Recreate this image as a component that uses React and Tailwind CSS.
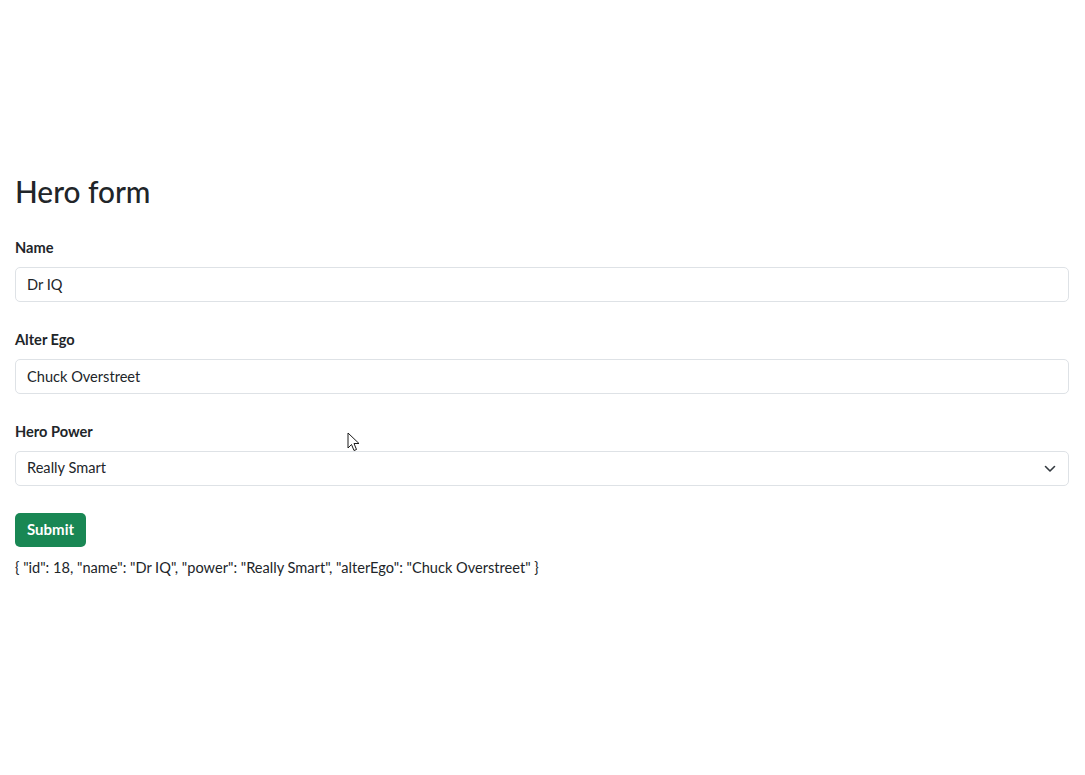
import { useState } from 'react';

const font = { fontFamily: 'Lato, "Noto Sans", "Liberation Sans", sans-serif' };

const Field = ({ label, children }) => (
    <div className="mb-[27px]">
        <label className="block text-[14.6px] font-bold leading-[22px] text-[#212529] mb-[8px]">{label}</label>
        {children}
    </div>
);

const inputCls = "block w-full h-[35px] px-[11px] border border-[#dee2e6] rounded-[5px] text-[14.6px] leading-[21.6px] text-[#212529] bg-white outline-none";

export default function App() {
    const [hero, setHero] = useState({ id: 18, name: 'Dr IQ', power: 'Really Smart', alterEgo: 'Chuck Overstreet' });

    return (
        <div className="relative min-h-[775px] bg-white" style={font}>
            <div className="pt-[175px] px-[15px] pr-[16px]">
                <h2 className="text-[29.8px] font-medium leading-[34.5px] text-[#212529] mb-[27px]">Hero form</h2>
                <form onSubmit={(e) => e.preventDefault()}>
                    <Field label="Name">
                        <input className={inputCls} style={font} value={hero.name} onChange={(e) => setHero({ ...hero, name: e.target.value })} />
                    </Field>
                    <Field label="Alter Ego">
                        <input className={inputCls} style={font} value={hero.alterEgo} onChange={(e) => setHero({ ...hero, alterEgo: e.target.value })} />
                    </Field>
                    <Field label="Hero Power">
                        <div className="relative">
                            <select className={inputCls + " appearance-none pr-[40px]"} style={font} value={hero.power} onChange={(e) => setHero({ ...hero, power: e.target.value })}>
                                <option>Really Smart</option>
                                <option>Super Flexible</option>
                                <option>Super Hot</option>
                                <option>Weather Changer</option>
                            </select>
                            <svg className="absolute right-[13px] top-[14px] pointer-events-none" width="12" height="8" viewBox="0 0 12 8" fill="none">
                                <path d="M1.5 1.5l4.5 4.5 4.5-4.5" stroke="#343a40" strokeWidth="1.6" strokeLinecap="round" strokeLinejoin="round" />
                            </svg>
                        </div>
                    </Field>
                    <button type="submit" className="h-[34px] px-[12px] rounded-[5px] bg-[#198754] text-white text-[15px] font-bold leading-[21.6px]" style={font}>Submit</button>
                </form>
                <div className="mt-[10px] text-[14.6px] leading-[21.6px] text-[#212529]">
                    {`{ "id": ${hero.id}, "name": "${hero.name}", "power": "${hero.power}", "alterEgo": "${hero.alterEgo}" }`}
                </div>
            </div>
            {/* mouse cursor in the screenshot */}
            <svg className="absolute left-[347px] top-[432px]" width="14" height="20" viewBox="0 0 14 20">
                <path d="M1 1 L1 16 L4.5 12.5 L7 18.5 L9.5 17.5 L7 11.5 L12 11.5 Z" fill="white" stroke="#1a1a1a" strokeWidth="1" strokeLinejoin="round" />
            </svg>
        </div>
    );
}
